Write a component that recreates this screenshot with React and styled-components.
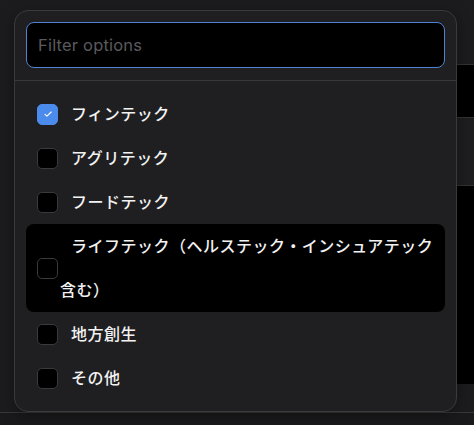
import React, { useState } from "react";
import styled, { createGlobalStyle } from "styled-components";

const options = [
  "フィンテック",
  "アグリテック",
  "フードテック",
  "ライフテック（ヘルステック・インシュアテック含む）",
  "地方創生",
  "その他",
];

const App = () => {
  const [checked, setChecked] = useState(["フィンテック"]);
  const [query, setQuery] = useState("");
  const hovered = options[3];

  const toggle = (name) => {
    setChecked((prev) =>
      prev.includes(name) ? prev.filter((n) => n !== name) : [...prev, name]
    );
  };

  return (
    <Page>
      <GlobalStyle />
      <Backdrop>
        <FieldColumn>
          <BlackField $height={53} />
          <GrayGap $height={68} />
          <BlackField $height={199} />
        </FieldColumn>
        <Footer />
      </Backdrop>
      <Popover>
        <SearchArea>
          <SearchInput
            placeholder="Filter options"
            value={query}
            onChange={(e) => setQuery(e.target.value)}
          />
        </SearchArea>
        <OptionList>
          {options
            .filter((o) => o.includes(query))
            .map((option) => (
              <OptionRow
                key={option}
                $active={option === hovered}
                onClick={() => toggle(option)}
              >
                <Box $checked={checked.includes(option)}>
                  {checked.includes(option) && (
                    <svg width="10" height="8" viewBox="0 0 10 8" fill="none">
                      <path
                        d="M2 4.3L4 6.1L8.2 2"
                        stroke="white"
                        strokeWidth="1.1"
                        strokeLinecap="round"
                        strokeLinejoin="round"
                      />
                    </svg>
                  )}
                </Box>
                <Label>{option}</Label>
              </OptionRow>
            ))}
        </OptionList>
      </Popover>
    </Page>
  );
};

export default App;

const GlobalStyle = createGlobalStyle`
  html, body {
    margin: 0;
    padding: 0;
    background: #1c1c1e;
  }
  * {
    box-sizing: border-box;
  }
`;

const Page = styled.div`
  position: relative;
  width: 474px;
  height: 425px;
  overflow: hidden;
  background: #1c1c1e;
  font-family: Inter, "Noto Sans CJK JP", sans-serif;
`;

const Backdrop = styled.div`
  display: flex;
  flex-direction: column;
  height: 100%;
`;

const FieldColumn = styled.div`
  flex: 1;
  display: flex;
  flex-direction: column;
  padding: 64px 0 0 456px;
`;

const BlackField = styled.div`
  height: ${(props) => props.$height}px;
  background: #000;
  border-top: 1px solid #333335;
  border-left: 1px solid #333335;
`;

const GrayGap = styled.div`
  height: ${(props) => props.$height}px;
  background: #1e1e20;
  border-top: 1px solid #333335;
  border-left: 1px solid #333335;
`;

const Footer = styled.div`
  height: 13px;
  background: #1a1a1c;
  border-top: 1px solid #38383a;
`;

const Popover = styled.div`
  position: absolute;
  top: 10px;
  left: 14px;
  width: 443px;
  height: 402px;
  background: #1f1f21;
  border: 1px solid #3a3a3c;
  border-radius: 14px;
  display: flex;
  flex-direction: column;
  box-shadow: 0 4px 16px rgba(0, 0, 0, 0.35);
`;

const SearchArea = styled.div`
  padding: 11px 11px 12px;
  border-bottom: 1px solid #38383a;
`;

const SearchInput = styled.input`
  width: 100%;
  height: 46px;
  background: #000;
  border: 1.5px solid #4f83d1;
  border-radius: 8px;
  padding: 0 11px;
  color: #fff;
  font-family: Inter, "Noto Sans CJK JP", sans-serif;
  font-size: 16.5px;
  letter-spacing: 0.2px;
  outline: none;

  &::placeholder {
    color: #5a5a5e;
  }
`;

const OptionList = styled.div`
  display: flex;
  flex-direction: column;
  padding: 11px 11px 10px;
`;

const OptionRow = styled.div`
  display: flex;
  align-items: center;
  gap: 2px;
  padding-left: 11px;
  padding-right: 8px;
  border-radius: 8px;
  background: ${(props) => (props.$active ? "#000" : "transparent")};
  cursor: pointer;
`;

const Box = styled.span`
  flex: none;
  width: 21px;
  height: 21px;
  border-radius: 5px;
  display: flex;
  align-items: center;
  justify-content: center;
  background: ${(props) => (props.$checked ? "#4a8bec" : "#000")};
  border: 1px solid ${(props) => (props.$checked ? "#4a8bec" : "#3a3a3c")};
`;

const Label = styled.span`
  flex: 1;
  text-indent: 11px;
  line-height: 44px;
  font-size: 16px;
  font-weight: 500;
  color: #f2f2f2;
  letter-spacing: 0.5px;
`;
